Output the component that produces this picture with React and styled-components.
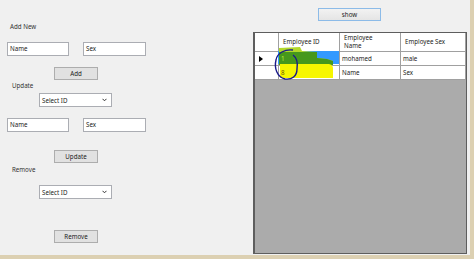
import React from 'react';
import styled, { createGlobalStyle } from 'styled-components';

const Global = createGlobalStyle`
  html, body { margin: 0; padding: 0; background: #f0f0f0; }
  body { font-family: "Noto Sans", "Liberation Sans", sans-serif; font-size: 6.2px; color: #333; }
`;

const Window = styled.div`
  width: 474px;
  height: 259px;
  display: flex;
  flex-direction: column;
  overflow: hidden;
`;

const Body = styled.div`
  display: flex;
  height: 255px;
`;

const Frame = styled.div`
  background: #dcd0b2;
  flex: 0 0 4px;
`;

const LeftPanel = styled.div`
  width: 253px;
  display: flex;
  flex-direction: column;
`;

const Label = styled.div`
  height: 10px;
  line-height: 10px;
  margin-top: ${p => p.top}px;
  padding-left: ${p => p.left}px;
`;

const FieldRow = styled.div`
  display: flex;
  gap: 14px;
  padding-left: 7px;
  margin-top: ${p => p.top}px;
`;

const TextBox = styled.div`
  box-sizing: border-box;
  width: ${p => p.w}px;
  height: 14px;
  background: #fff;
  border: 1px solid #abadb3;
  line-height: 12px;
  padding-left: 2px;
  color: #222;
`;

const Combo = styled.div`
  box-sizing: border-box;
  width: 73px;
  height: 14px;
  margin-left: 39px;
  margin-top: ${p => p.top}px;
  background: #fff;
  border: 1px solid #abadb3;
  display: flex;
  align-items: center;
  justify-content: space-between;
  padding: 0 4px 0 2px;
  color: #222;
`;

const Button = styled.div`
  box-sizing: border-box;
  width: ${p => p.w || 44}px;
  height: 13px;
  margin-left: ${p => p.left}px;
  margin-top: ${p => p.top}px;
  background: ${p => (p.focus ? 'linear-gradient(#f2f2f2, #e5e5e5)' : '#e1e1e1')};
  border: 1px solid ${p => (p.focus ? '#8cbbe8' : '#adadad')};
  display: flex;
  align-items: center;
  justify-content: center;
  color: #222;
`;

const RightPanel = styled.div`
  flex: 1;
  display: flex;
  flex-direction: column;
`;

const GridBox = styled.div`
  position: relative;
  box-sizing: border-box;
  width: 214px;
  height: 222px;
  margin-top: 11px;
  background: #ababab;
  border: 1px solid #5e5e5e;
  border-left-width: 2px;
`;

const Table = styled.div`
  display: grid;
  grid-template-columns: 24px 61px 61px 65px;
  grid-template-rows: 19px 14px 14px;
`;

const Cell = styled.div`
  box-sizing: border-box;
  background: #fff;
  border-right: 1px solid #a0a0a0;
  border-bottom: 1px solid #a0a0a0;
  display: flex;
  align-items: center;
  padding-left: ${p => (p.head ? 4 : 2)}px;
  line-height: ${p => (p.head ? 8 : 7)}px;
  color: #222;
`;

const CellText = styled.span`
  position: relative;
  z-index: 2;
  color: ${p => p.color || '#222'};
`;

const Marks = styled.svg`
  position: absolute;
  left: -2px;
  top: -1px;
  z-index: 1;
`;

const Chevron = () => (
  <svg width="5" height="4" viewBox="0 0 5 4">
    <path d="M0.5 0.8 L2.5 2.8 L4.5 0.8" fill="none" stroke="#333" strokeWidth="1" />
  </svg>
);

const rows = [
  { id: '1', name: 'mohamed', sex: 'male', color: '#c4ec3a', current: true },
  { id: '8', name: 'Name', sex: 'Sex', color: '#6b5800' },
];

export default function App() {
  return (
    <Window>
      <Global />
      <Body>
        <LeftPanel>
          <Label top={22} left={10}>Add New</Label>
          <FieldRow top={10}>
            <TextBox w={62}>Name</TextBox>
            <TextBox w={63}>Sex</TextBox>
          </FieldRow>
          <Button left={54} top={11}>Add</Button>
          <Label top={1} left={12}>Update</Label>
          <Combo top={2}>Select ID <Chevron /></Combo>
          <FieldRow top={11}>
            <TextBox w={62}>Name</TextBox>
            <TextBox w={63}>Sex</TextBox>
          </FieldRow>
          <Button left={54} top={18}>Update</Button>
          <Label top={2} left={12}>Remove</Label>
          <Combo top={10}>Select ID <Chevron /></Combo>
          <Button left={54} top={31}>Remove</Button>
        </LeftPanel>
        <RightPanel>
          <Button left={65} top={8} w={63} focus>show</Button>
          <GridBox>
            <Table>
              <Cell />
              <Cell head>Employee ID</Cell>
              <Cell head>Employee<br />Name</Cell>
              <Cell head>Employee Sex</Cell>
              {rows.map(r => (
                <React.Fragment key={r.id}>
                  <Cell>
                    {r.current && (
                      <svg width="4" height="6" viewBox="0 0 4 6" style={{ marginLeft: 2 }}>
                        <path d="M0 0 L4 3 L0 6 Z" fill="#000" />
                      </svg>
                    )}
                  </Cell>
                  <Cell><CellText color={r.color}>{r.id}</CellText></Cell>
                  <Cell><CellText>{r.name}</CellText></Cell>
                  <Cell><CellText>{r.sex}</CellText></Cell>
                </React.Fragment>
              ))}
            </Table>
            <Marks width="100" height="60" viewBox="0 0 100 60">
              <rect x="25" y="19" width="61" height="13" fill="#3399ff" />
              <path d="M26 16 L47 15 L49 19 L64 20 L64 26 L74 27 L80 29 L80 33 L26 33 Z" fill="#b2d82a" />
              <path d="M26 20 L64 20 L64 26 L74 27 L80 29 L80 33 L26 33 Z" fill="#46981c" />
              <path d="M27 32 L76 32 Q81 33 80 39 L80 46 L27 46 Z" fill="#f6f600" />
              <path d="M40 18 C32 17 24 21 23 28 C21 36 24 45 32 47 C39 48 44 44 44 37 C45 31 44 26 40 23"
                fill="none" stroke="#1a1a8a" strokeWidth="1.4" />
            </Marks>
          </GridBox>
        </RightPanel>
        <Frame />
      </Body>
      <Frame />
    </Window>
  );
}
